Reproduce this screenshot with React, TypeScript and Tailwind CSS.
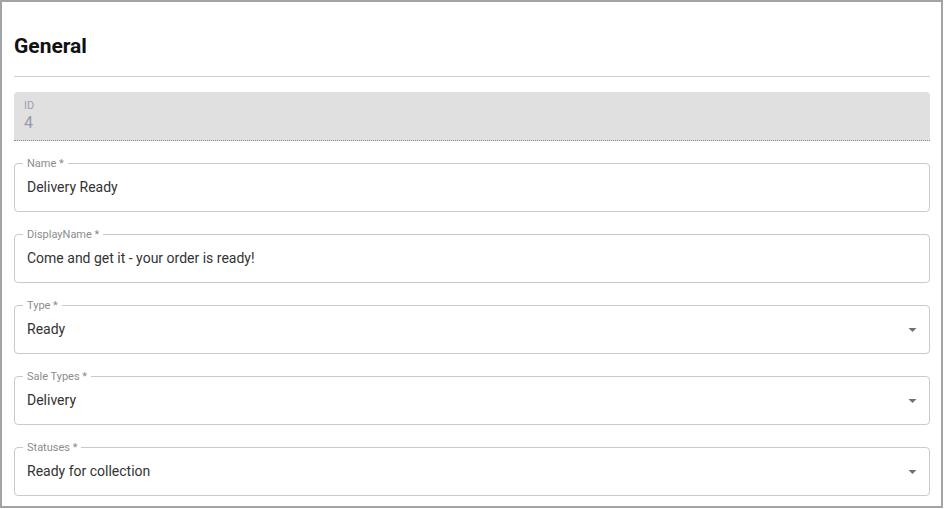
const fields = [
  { label: 'Name *', value: 'Delivery Ready', select: false },
  { label: 'DisplayName *', value: 'Come and get it - your order is ready!', select: false },
  { label: 'Type *', value: 'Ready', select: true },
  { label: 'Sale Types *', value: 'Delivery', select: true },
  { label: 'Statuses *', value: 'Ready for collection', select: true },
]

function ArrowDropDown() {
  return (
    <svg viewBox="0 0 24 24" className="w-[19px] h-[19px] shrink-0 fill-[#707070]">
      <path d="M7 10l5 5 5-5z" />
    </svg>
  )
}

export default function App() {
  return (
    <div className="w-[943px] h-[508px] border-2 border-[#a3a3a3] bg-white font-[Roboto,'Liberation_Sans',sans-serif] overflow-hidden">
      <div className="pt-[30px] pl-[12px] pr-[11px]">
        {/* Section title */}
        <h2 className="text-[21px] leading-[28px] font-bold text-[#111]">General</h2>
        <div className="mt-[16px] h-px bg-[#cfcfcf]"></div>

        {/* Read-only ID */}
        <div className="mt-[15px] h-[49px] bg-[#e0e0e0] rounded-t-[4px] border-b border-dotted border-[#8a8a8a] pl-[10px] pt-[8px]">
          <div className="text-[11px] leading-[11px] text-[#a19db0]">ID</div>
          <div className="text-[16px] leading-[23px] text-[#9699ab]">4</div>
        </div>

        {/* Editable fields */}
        <div className="mt-[17px] flex flex-col gap-[17px]">
          {fields.map((f) => (
            <fieldset
              key={f.label}
              className="border border-[#cacaca] rounded-[4px] pl-[8px] pr-[7px] pt-[8px] pb-[14px]"
            >
              <legend className="px-[4px] text-[11px] leading-[11px] text-[#8c8c8c]">{f.label}</legend>
              <div className="flex items-center justify-between pl-[4px] h-[20px]">
                <span className="text-[14px] leading-[20px] text-[#333]">{f.value}</span>
                {f.select && <ArrowDropDown />}
              </div>
            </fieldset>
          ))}
        </div>
      </div>
    </div>
  )
}
